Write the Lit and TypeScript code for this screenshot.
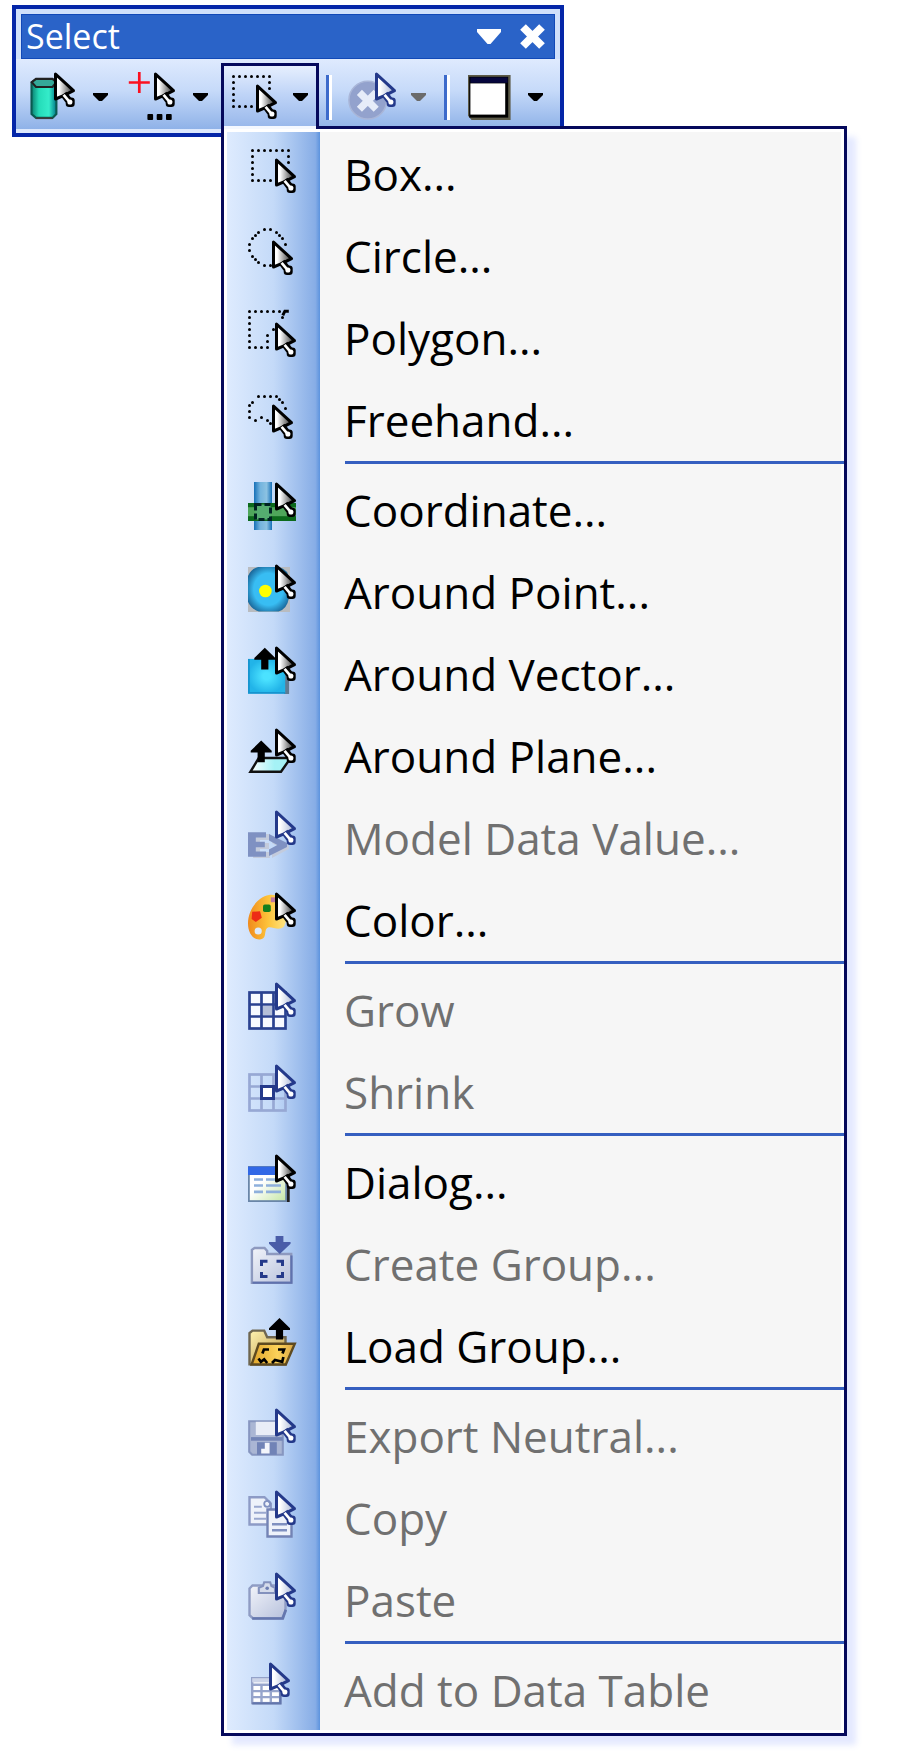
import { LitElement, html, css, svg, nothing, type SVGTemplateResult } from "lit";
import { customElement, property, state } from "lit/decorators.js";
import { classMap } from "lit/directives/class-map.js";

const INK = "#000";
const FADED = "#24398a";

/* One grid cell of an icon is one unit; every icon is 16 x 16 cells. */
const dots = (points: number[][]) =>
  points.map(([x, y]) => svg`<circle cx=${x + 0.5} cy=${y + 0.5} r="0.5" fill="#000"></circle>`);

const pointer = (x: number, y: number, ink = INK) => svg`
  <g transform="translate(${x} ${y})" stroke-linejoin="round">
    <path d="M.5.7V9L3.2 7.9 6.5 6.2Z" fill=${ink === INK ? "url(#shine)" : "url(#haze)"} stroke=${ink}></path>
    <path d="M3.2 7.3 4.8 9.4" stroke=${ink} stroke-width="2.4"></path>
    <rect x="3.9" y="8.5" width="3" height="3.2" rx="1.1" fill=${ink}></rect>
    <path d="M3.2 7.6 4.9 9.6" stroke="#fff" stroke-width=".9"></path>
    <circle cx="5.3" cy="10" r=".85" fill="#fff"></circle>
  </g>`;

const arrowUp = (x: number, y: number) =>
  svg`<path transform="translate(${x} ${y})" d="M3.5 0 7 3.4V4H4.7V7.2H2.3V4H0V3.4Z" fill="#000"></path>`;

const grid = (line: string, fill: string) => svg`
  <rect x=".5" y="3.5" width="12" height="12" fill=${fill} stroke=${line} stroke-width=".9"></rect>
  <path d="M4.5 3.5v12M8.5 3.5v12M.5 7.5h12M.5 11.5h12" stroke=${line} stroke-width=".9"></path>`;

const ICONS: Record<string, () => SVGTemplateResult> = {
  cylinder: () => svg`
    <path d="M1.5 3.5 3 2.4H8.5L9.8 3.5V14L8.5 15.3H3L1.5 14Z" fill="url(#tube)" stroke="#0a5a50" stroke-width=".7"></path>
    <path d="M1.6 3.4 3 2.3H8.5L9.8 3.4 8.5 5H3Z" fill="#35a898" stroke="#222" stroke-width=".7"></path>
    <path d="M3 15.4H8.5" stroke="#3b3b3b" stroke-width=".6"></path>
    ${pointer(9, 0)}`,
  pick: () => svg`
    <path d="M.6 3.5H7.6M4.1 0V7" stroke="#fb1020" stroke-width=".9"></path>
    ${pointer(9, 0)}
    <rect x="6.8" y="14" width="1.9" height="2" rx=".3" fill="#000"></rect>
    <rect x="9.9" y="14" width="1.9" height="2" rx=".3" fill="#000"></rect>
    <rect x="13" y="14" width="1.9" height="2" rx=".3" fill="#000"></rect>`,
  box: () => svg`
    ${dots([[1, 1], [3, 1], [5, 1], [7, 1], [9, 1], [11, 1], [13, 1], [13, 3], [13, 5], [1, 3], [1, 5], [1, 7], [1, 9], [1, 11], [3, 11], [5, 11], [7, 11]])}
    ${pointer(9, 4)}`,
  circle: () => svg`
    ${dots([[5, 0], [7, 0], [3, 1], [2, 2], [1, 3], [0, 5], [0, 7], [1, 9], [2, 10], [3, 11], [5, 12], [7, 12], [9, 1], [10, 2], [11, 3], [12, 5]])}
    ${pointer(8, 4)}`,
  polygon: () => svg`
    ${dots([[0, 0], [2, 0], [4, 0], [6, 0], [8, 0], [10, 0], [0, 2], [0, 4], [0, 6], [0, 8], [0, 10], [0, 12], [2, 12], [4, 12], [6, 12], [6, 10], [6, 8], [8, 6], [11, 2]])}
    <path d="M11.6 1.8 12.3.4H13.6" stroke="#000"></path>
    ${pointer(9, 4)}`,
  freehand: () => svg`
    ${dots([[3, 1], [5, 1], [7, 1], [9, 1], [10, 2], [11, 3], [12, 5], [1, 3], [0, 4], [0, 6], [0, 8], [2, 9], [4, 8], [6, 9], [7, 10]])}
    ${pointer(8, 4)}`,
  coordinate: () => svg`
    <rect x="2" y="0" width="6" height="16" fill="url(#pipe)"></rect>
    <rect x="0" y="7" width="16" height="6" fill="#0c6a1c"></rect>
    <rect x="0" y="8.4" width="16" height="3" fill="#4fa65b"></rect>
    <rect x="2.5" y="7.5" width="5" height="5" fill="#55ac70" stroke="#022" stroke-dasharray="2 1"></rect>
    ${pointer(9, 0)}`,
  point: () => svg`
    <rect x="0" y="1" width="14" height="15" fill="#b9bcc0"></rect>
    <path d="M3.4 1H10.4Q13.6 2 13.6 5V11.5Q13 15 10.2 15.8H3.6Q1 15 0 12.6V4Q1 1.6 3.4 1Z" fill="url(#disc)"></path>
    <circle cx="5.8" cy="9" r="2.1" fill="#ff0"></circle>
    ${pointer(9, 0)}`,
  vector: () => svg`
    <rect x="12" y="5" width="1.7" height="11" fill="#607b93"></rect>
    <rect x="0" y="4.3" width="12.4" height="11.5" fill="url(#block)"></rect>
    <path d="M.3 4.3V15.6H12.4" stroke="#1694cf" stroke-width=".6"></path>
    ${arrowUp(2.1, 0.6)}
    ${pointer(9, 0)}`,
  plane: () => svg`
    <path d="M3.6 10H14.2L11 14.6H.8Z" fill="url(#sheet)" stroke="#111" stroke-width=".8"></path>
    ${arrowUp(0.9, 4.2)}
    ${pointer(9, 0)}`,
  model: () => svg`
    <path d="M1.7 8H7.3V10H4V11H7V13H4V14H7.3V16H1.7ZM8 8.6 13.6 11.8V13L8 16V13.8L10.4 12.4 8 11Z" fill="#c3cbdc"></path>
    <path d="M0 7.4H6V9.2H2.6V10.6H5.6V12.4H2.6V13.8H6V15.6H0ZM7 8 13 11V12.3L7 15.3V13.2L9.8 11.7 7 10.2Z" fill="#7f91c2"></path>
    ${pointer(9, 0, FADED)}`,
  color: () => svg`
    <path d="M7 1C10 .6 13 3 13.4 8L12 11.5C10 13.5 7 10.5 6 12.5 5.5 14 6 15.6 4 15.8 1.6 16 0 13.5 0 10.5 0 6 3 1.8 7 1Z" fill="url(#palette)"></path>
    <rect x="5" y="4.2" width="2.6" height="2.5" rx=".6" fill="#167f1d"></rect>
    <path d="M1.4 6.6 4 6.4 4.6 8.6 2.6 10 1.2 9Z" fill="#ed2b16"></path>
    <circle cx="3.4" cy="13" r="1.2" fill="#dce9fb"></circle>
    <rect x="7.6" y="1.8" width="1.4" height="1.6" fill="#bd76a1"></rect>
    ${pointer(9, 0)}`,
  grow: () => svg`
    ${grid("#2b4290", "#f8faff")}
    <rect x="5" y="8" width="3" height="3" fill="#b5bfd8"></rect>
    ${pointer(9, 0, FADED)}`,
  shrink: () => svg`
    ${grid("#97a8d4", "none")}
    <rect x="4.5" y="7.5" width="4" height="4" fill="#fff" stroke="#24398a"></rect>
    ${pointer(9, 0, FADED)}`,
  dialog: () => svg`
    <rect x="12.5" y="5" width="1.4" height="11" fill="#222"></rect>
    <rect x=".3" y="4.3" width="12.4" height="11.4" fill="url(#page)" stroke="#6a86a8" stroke-width=".6"></rect>
    <rect x="0" y="4.2" width="12" height="2.8" fill="#3168e6"></rect>
    <path d="M2 8.5H5M6 8.5H11M2 10.5H5M6 10.5H11M2 12.6H5M6 12.6H11" stroke="#8fb0dc" stroke-width=".9"></path>
    ${pointer(9, 0)}`,
  create: () => svg`
    <path d="M1.3 6V4.6L2.2 4H5.5L6.4 5V6H14.4V15.6H1.3Z" fill="url(#mist)" stroke="#8d99bf" stroke-width=".8"></path>
    <path d="M14.5 6.5V15.6H1.5" stroke="#5f72ae" stroke-width=".7"></path>
    <path d="M6.5 8.4H4.5V10M9.5 8.4H11.5V10M6.5 13.5H4.5V12M9.5 13.5H11.5V12" stroke="#24398a"></path>
    <path d="M9.2 0H11.8V2H14.2V2.6L10.6 6 7 2.6V2H9.2Z" fill="#4a5da8"></path>`,
  load: () => svg`
    <path d="M.5 15.4V5L1.5 4.2H5.4L6.4 6.4H12.5V15.4Z" fill="url(#folder)" stroke="#6e6650" stroke-width=".8"></path>
    <path d="M3.6 8.6H15.6L12.6 15.5H1.2Z" fill="url(#flap)" stroke="#5e4a20" stroke-width=".8"></path>
    <path d="M7 10.5H5.3L4.8 11.8M10 10.5H12L11.5 11.8M3.5 13.5 4.3 14.6 5.4 13.8 6.4 15M8 15 9 14 11.4 14.6 11.8 13" stroke="#000" stroke-width=".9"></path>
    ${arrowUp(7, 0)}`,
  export: () => svg`
    <path d="M.4 4.4H11.6V15.6H1.4L.4 14.6Z" fill="#aab6d4" stroke="#8796c0" stroke-width=".7"></path>
    <rect x="2.6" y="4.6" width="7.4" height="4.4" fill="#e9edf7"></rect>
    <rect x="1" y="9.7" width="10.6" height="1.2" fill="#7284b6"></rect>
    <rect x="3" y="11.4" width="6.6" height="4.2" fill="#7183b6"></rect>
    <path d="M5.6 11.6H7.2V15.2H4.4V13.6H5.6Z" fill="#f3f5fb"></path>
    ${pointer(9, 0, FADED)}`,
  copy: () => svg`
    <path d="M.5 2.4H5.5L7.6 4.5V11.5H.5Z" fill="#eef2fa" stroke="#8d9bc6" stroke-width=".8"></path>
    <path d="M2 5.6H4.6M2 7.6H6M2 9.6H6" stroke="#9aa8cf" stroke-width=".7"></path>
    <path d="M6.5 6.5H12L14.5 9V15.5H6.5Z" fill="#eef2fa" stroke="#7383b5" stroke-width=".8"></path>
    <path d="M8 11.4H13M8 13.4H13" stroke="#7f90c0" stroke-width=".8"></path>
    <circle cx="6.4" cy="4.6" r="1" fill="none" stroke="#7f90c0" stroke-width=".6"></circle>
    ${pointer(9, 0, FADED)}`,
  paste: () => svg`
    <path d="M.5 5.5 1.5 4.5H12L12.5 6V13L11.4 15.4H1.6L.5 14.4Z" fill="url(#mist)" stroke="#8f9cc4" stroke-width=".8"></path>
    <path d="M1.4 15.5H11.6L12.6 12.6" stroke="#6577ae" stroke-width=".9"></path>
    <path d="M3.6 7V5.3L5 4.7 5.4 3.4H7.4L7.8 4.7 9 5.3V7Z" fill="#d4dbeb" stroke="#8391bd" stroke-width=".7"></path>
    <circle cx="6.4" cy="5.4" r=".6" fill="#6d7eb2"></circle>
    ${pointer(9, 0, FADED)}`,
  table: () => svg`
    <rect x="1.4" y="5.4" width="9.3" height="8.3" fill="#fff" stroke="#94a2c9" stroke-width=".8"></rect>
    <rect x="1.4" y="5.4" width="9.3" height="1.4" fill="#ccd4e8"></rect>
    <path d="M1.4 7.6H10.7M1.4 9.7H10.7M1.4 11.7H10.7M4.5 7.6V13.7M7.6 7.6V13.7" stroke="#97a5cc" stroke-width=".8"></path>
    <path d="M1.4 13.8H10.8V9" stroke="#6376ac" stroke-width=".8"></path>
    ${pointer(7, 0, FADED)}`,
  clear: () => svg`
    <circle cx="6.6" cy="9.4" r="6.3" fill="#93a2cd" stroke="#a9b6d8" stroke-width=".5"></circle>
    <path d="M3.8 6.8 9.4 12.4M9.4 6.8 3.8 12.4" stroke="#e6ecf9" stroke-width="2.4"></path>
    ${pointer(9, 0, FADED)}`,
  window: () => svg`
    <path d="M1 1H15.2V16H2.2L1 14.6Z" fill="#5c5a48"></path>
    <rect x="1.4" y="1.6" width="13" height="13.6" fill="#000"></rect>
    <rect x="1.8" y="1.8" width="12.4" height="1.8" fill="#06063c"></rect>
    <rect x="1.8" y="3.8" width="11.6" height="10.4" fill="#fff"></rect>`,
};

@customElement("pixel-icon")
export class PixelIcon extends LitElement {
  @property() name = "";

  static styles = css`
    :host { display: block; flex: none; }
    .art { display: block; width: 48px; height: 48px; overflow: visible; fill: none; }
  `;

  render() {
    return html`<svg class="art" viewBox="0 0 16 16" aria-hidden="true">
      <defs>
        <linearGradient id="shine"><stop offset=".2" stop-color="#fff"/><stop offset=".85" stop-color="#555"/></linearGradient>
        <linearGradient id="haze"><stop offset=".2" stop-color="#fff"/><stop offset="1" stop-color="#a4b2d4"/></linearGradient>
        <linearGradient id="tube"><stop offset="0" stop-color="#0b7f70"/><stop offset=".3" stop-color="#25dcb9"/><stop offset=".7" stop-color="#35ecca"/><stop offset="1" stop-color="#078"/></linearGradient>
        <linearGradient id="pipe"><stop offset="0" stop-color="#1670b8"/><stop offset=".35" stop-color="#74b4de"/><stop offset=".7" stop-color="#8cc2e2"/><stop offset="1" stop-color="#1670b8"/></linearGradient>
        <radialGradient id="disc" r=".6"><stop offset=".6" stop-color="#38bdf3"/><stop offset="1" stop-color="#175f92"/></radialGradient>
        <radialGradient id="block"><stop offset=".2" stop-color="#4be2ff"/><stop offset="1" stop-color="#22b4e8"/></radialGradient>
        <linearGradient id="sheet"><stop offset="0" stop-color="#fff"/><stop offset=".6" stop-color="#a5f2f6"/></linearGradient>
        <linearGradient id="palette"><stop offset="0" stop-color="#f08a1c"/><stop offset=".5" stop-color="#fdc33a"/><stop offset="1" stop-color="#fde98e"/></linearGradient>
        <linearGradient id="page" x2="1" y2="1"><stop offset=".4" stop-color="#fff"/><stop offset="1" stop-color="#c4e6a4"/></linearGradient>
        <linearGradient id="mist" x2="1" y2="1"><stop offset="0" stop-color="#f2f4fa"/><stop offset="1" stop-color="#b7c1dc"/></linearGradient>
        <linearGradient id="folder" x2="1" y2="1"><stop offset="0" stop-color="#fff3b0"/><stop offset="1" stop-color="#b99647"/></linearGradient>
        <linearGradient id="flap"><stop offset="0" stop-color="#e0a52c"/><stop offset=".6" stop-color="#fcd25a"/><stop offset="1" stop-color="#d9a544"/></linearGradient>
      </defs>
      ${ICONS[this.name]?.() ?? nothing}
    </svg>`;
  }
}

interface Entry {
  label: string;
  icon: string;
  disabled?: boolean;
}

const GROUPS: Entry[][] = [
  [
    { label: "Box...", icon: "box" },
    { label: "Circle...", icon: "circle" },
    { label: "Polygon...", icon: "polygon" },
    { label: "Freehand...", icon: "freehand" },
  ],
  [
    { label: "Coordinate...", icon: "coordinate" },
    { label: "Around Point...", icon: "point" },
    { label: "Around Vector...", icon: "vector" },
    { label: "Around Plane...", icon: "plane" },
    { label: "Model Data Value...", icon: "model", disabled: true },
    { label: "Color...", icon: "color" },
  ],
  [
    { label: "Grow", icon: "grow", disabled: true },
    { label: "Shrink", icon: "shrink", disabled: true },
  ],
  [
    { label: "Dialog...", icon: "dialog" },
    { label: "Create Group...", icon: "create", disabled: true },
    { label: "Load Group...", icon: "load" },
  ],
  [
    { label: "Export Neutral...", icon: "export", disabled: true },
    { label: "Copy", icon: "copy", disabled: true },
    { label: "Paste", icon: "paste", disabled: true },
  ],
  [{ label: "Add to Data Table", icon: "table", disabled: true }],
];

@customElement("select-menu")
export class SelectMenu extends LitElement {
  static styles = css`
    :host { display: block; }
    .menu {
      position: relative;
      box-sizing: border-box;
      min-width: 626px;
      padding: 3px;
      border: 3px solid #05095c;
      background: #fff;
      box-shadow: 10px 10px 6px -1px rgba(90, 120, 255, 0.16);
    }
    .menu::before {
      content: "";
      position: absolute;
      top: -3px;
      left: 0;
      width: 92px;
      height: 3px;
      background: #f4f8ff;
    }
    .list {
      background:
        linear-gradient(90deg, #deebfe, #c4daf8 50%, #87ade6 95%, #5c93de) 0 0 / 93px 100% no-repeat,
        #f6f6f6;
    }
    .group + .group::before {
      content: "";
      display: block;
      height: 3px;
      margin: 0 -3px 4px 118px;
      border-top: 1px solid #f6f6f6;
      background: #355fc0;
    }
    .item {
      display: flex;
      align-items: flex-start;
      gap: 48px;
      box-sizing: border-box;
      width: 100%;
      height: 82px;
      margin: 0;
      padding: 14px 16px 0 21px;
      border: 0;
      background: none;
      color: #000;
      font: 44px/56px "Open Sans", "Noto Sans", sans-serif;
      text-align: left;
      white-space: nowrap;
    }
    .item:disabled { color: #707070; }
  `;

  render() {
    return html`<div class="menu" role="menu" aria-label="Select by">
      <div class="list">
        ${GROUPS.map(
          (group) => html`<div class="group" role="group">
            ${group.map(
              (entry) => html`<button class="item" role="menuitem" ?disabled=${entry.disabled}>
                <pixel-icon name=${entry.icon}></pixel-icon><span>${entry.label}</span>
              </button>`
            )}
          </div>`
        )}
      </div>
    </div>`;
  }
}

@customElement("app-root")
export class AppRoot extends LitElement {
  @state() private open = true;

  static styles = css`
    :host {
      display: block;
      min-height: 100vh;
      padding: 5px 12px 0;
      box-sizing: border-box;
      background: #fff;
      font-family: "Open Sans", "Noto Sans", sans-serif;
    }
    .palette {
      display: inline-block;
      vertical-align: top;
      border: 4px solid #0426a8;
      background: #cfe0fb;
    }
    .title {
      display: flex;
      align-items: center;
      gap: 18px;
      height: 45px;
      margin: 5px 5px 0;
      padding: 0 9px 0 5px;
      background: #2a63c8;
      box-shadow: inset 0 0 0 1px #1149b8;
      color: #fff;
    }
    .name {
      flex: 1;
      margin: 0;
      font-size: 34px;
      line-height: 45px;
      font-weight: 500;
    }
    .control { padding: 0; border: 0; background: none; color: inherit; }
    .control svg { display: block; }
    .tools {
      display: flex;
      height: 66px;
      padding: 4px 4px 0 5px;
      border-bottom: 4px solid #dce8fd;
      background: linear-gradient(#dfeafe, #c6daf9 45%, #8fb2e8);
    }
    .slot { position: relative; }
    .tool {
      display: flex;
      align-items: flex-start;
      gap: 18px;
      box-sizing: border-box;
      height: 66px;
      margin: 0;
      padding: 9px 13px 0 6px;
      border: 0;
      background: none;
      color: #000;
    }
    .tool:disabled { gap: 15px; color: #6b6b6b; }
    .tool.open {
      gap: 16px;
      padding: 6px 8px 0 5px;
      border: 3px solid #05095c;
      border-bottom: 0;
      background: linear-gradient(#e6effe, #bfd4f7 45%, #96b6ea);
    }
    .tool.last { gap: 15px; padding-left: 15px; }
    .caret { display: block; width: 15px; height: 9px; margin-top: 21px; }
    .rule {
      width: 3px;
      height: 45px;
      margin: 12px 10px 0 7px;
      border-right: 3px solid #fff;
      background: #3c6acb;
    }
    .rule.second { margin: 12px 0 0 5px; }
    .menu { position: absolute; top: 63px; left: 0; z-index: 1; }
  `;

  private caret() {
    return html`<svg class="caret" viewBox="0 0 15 9" aria-hidden="true"><path d="M0 0H15V2L9 8H6L0 2Z" fill="currentColor"></path></svg>`;
  }

  private tool(label: string, icon: string, extra: Record<string, boolean> = {}, disabled = false) {
    return html`<button class=${classMap({ tool: true, ...extra })} aria-label=${label} ?disabled=${disabled}>
      <pixel-icon name=${icon}></pixel-icon>${this.caret()}
    </button>`;
  }

  private toggle() {
    this.open = !this.open;
  }

  render() {
    return html`<section class="palette" aria-label="Select">
      <header class="title">
        <h1 class="name">Select</h1>
        <button class="control" aria-label="Options">
          <svg width="24" height="15" viewBox="0 0 24 15"><path d="M0 0H24V3L13.5 15H10.5L0 3Z" fill="currentColor"></path></svg>
        </button>
        <button class="control" aria-label="Close">
          <svg width="27" height="27" viewBox="0 0 27 27"><path d="M4 4 23 23M23 4 4 23" stroke="currentColor" stroke-width="8"></path></svg>
        </button>
      </header>
      <div class="tools" role="toolbar">
        ${this.tool("Pick solids", "cylinder")} ${this.tool("Pick by position", "pick")}
        <div class="slot">
          <button
            class=${classMap({ tool: true, open: this.open })}
            aria-label="Select by shape"
            aria-haspopup="menu"
            aria-expanded=${this.open}
            @click=${this.toggle}
          >
            <pixel-icon name="box"></pixel-icon>${this.caret()}
          </button>
          ${this.open ? html`<select-menu class="menu"></select-menu>` : nothing}
        </div>
        <span class="rule"></span>
        ${this.tool("Clear selection", "clear", {}, true)}
        <span class="rule second"></span>
        ${this.tool("Window", "window", { last: true })}
      </div>
    </section>`;
  }
}
